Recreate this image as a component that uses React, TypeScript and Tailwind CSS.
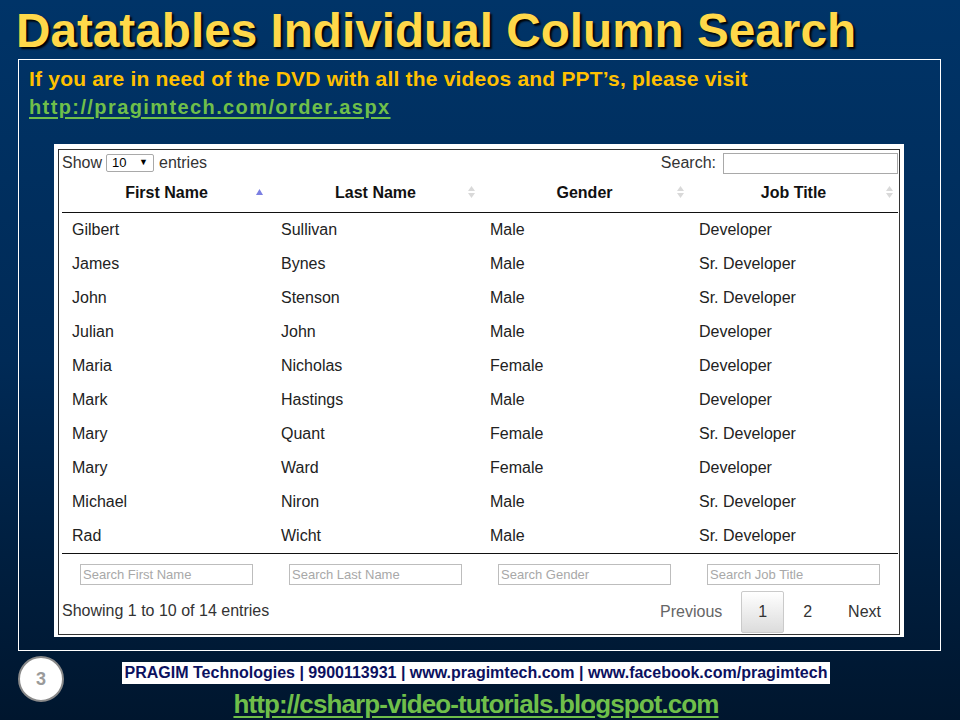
import React from 'react';

const rows = [
  ['Gilbert', 'Sullivan', 'Male', 'Developer'],
  ['James', 'Bynes', 'Male', 'Sr. Developer'],
  ['John', 'Stenson', 'Male', 'Sr. Developer'],
  ['Julian', 'John', 'Male', 'Developer'],
  ['Maria', 'Nicholas', 'Female', 'Developer'],
  ['Mark', 'Hastings', 'Male', 'Developer'],
  ['Mary', 'Quant', 'Female', 'Sr. Developer'],
  ['Mary', 'Ward', 'Female', 'Developer'],
  ['Michael', 'Niron', 'Male', 'Sr. Developer'],
  ['Rad', 'Wicht', 'Male', 'Sr. Developer'],
];

const columns = ['First Name', 'Last Name', 'Gender', 'Job Title'];

const SortAsc = () => (
  <svg width="7" height="6" viewBox="0 0 7 6" className="absolute right-[8px] top-[13px]">
    <polygon points="3.5,0 7,6 0,6" fill="#7b7fe2" />
  </svg>
);

const SortBoth = () => (
  <svg width="7" height="12" viewBox="0 0 7 12" className="absolute right-[5px] top-[10px]">
    <polygon points="3.5,0 7,5 0,5" fill="#d9d9d9" />
    <polygon points="0,7 7,7 3.5,12" fill="#d9d9d9" />
  </svg>
);

const App = () => {
  return (
    <div className="w-[960px] h-[720px] overflow-hidden bg-gradient-to-b from-[#003468] via-[#002a56] to-[#00162e] font-['Liberation_Sans',Arial,sans-serif]">
      {/* title */}
      <h1 className="pl-[16px] pt-[7px] text-[47.7px] leading-[48px] font-bold text-[#ffd84a] [text-shadow:2px_2px_2px_#000]">
        Datatables Individual Column Search
      </h1>

      <div className="ml-[18px] mt-[4px] w-[923px] h-[592px] border border-white">
        <div className="pl-[10px] pt-[5px]">
          <p className="text-[21px] leading-[28px] font-bold tracking-[0.2px] text-[#ffc000]">
            If you are in need of the DVD with all the videos and PPT’s, please visit
          </p>
          <p className="text-[20px] leading-[28px] font-bold tracking-[1.4px] text-[#6fbf4a] underline underline-offset-[3px]">
            http://pragimtech.com/order.aspx
          </p>
        </div>

        {/* datatable panel */}
        <div className="ml-[35px] mt-[23px] w-[850px] h-[493px] bg-white px-[4px] pt-[5px] pb-[2px]">
          <div className="h-full border border-[#333] pl-[3px] pr-[1px] text-[16px] text-[#222]">
            <div className="h-[26px] flex items-center justify-between text-[#333]">
              <div className="flex items-center">
                <span>Show</span>
                <span className="ml-[4px] mr-[5px] w-[48px] h-[18px] border border-[#a9a9a9] rounded-[2px] flex items-center justify-between px-[5px] text-[13px] text-black">
                  <span>10</span>
                  <span className="text-[9px]">▼</span>
                </span>
                <span>entries</span>
              </div>
              <div className="flex items-center">
                <span>Search:</span>
                <span className="ml-[7px] w-[175px] h-[21px] border border-[#a9a9a9]" />
              </div>
            </div>

            <div className="grid grid-cols-4 h-[37px] border-b border-[#111] font-bold text-[#111]">
              {columns.map((c, i) => (
                <div key={c} className="relative flex items-center justify-center pb-[2px]">
                  {c}
                  {i === 0 ? <SortAsc /> : <SortBoth />}
                </div>
              ))}
            </div>

            {rows.map((r, i) => (
              <div key={i} className="grid grid-cols-4 h-[34px] items-center">
                {r.map((v, j) => (
                  <div key={j} className="pl-[10px]">
                    {v}
                  </div>
                ))}
              </div>
            ))}

            <div className="grid grid-cols-4 border-t border-[#111] pt-[10px] pb-[6px]">
              {columns.map((c) => (
                <div key={c} className="px-[18px]">
                  <div className="h-[21px] border border-[#bdbdbd] flex items-center pl-[2px] text-[13px] text-[#a8a8a8]">
                    Search {c}
                  </div>
                </div>
              ))}
            </div>

            <div className="flex items-center justify-between h-[40px] pt-[2px] text-[#333]">
              <span className="-mt-[2px]">Showing 1 to 10 of 14 entries</span>
              <div className="flex items-center">
                <span className="px-[16px] py-[8px] border border-transparent text-[#666]">Previous</span>
                <span className="ml-[2px] px-[16px] py-[8px] border border-[#cacaca] rounded-[2px] bg-gradient-to-b from-white to-[#dcdcdc]">1</span>
                <span className="ml-[2px] px-[16px] py-[8px] border border-transparent">2</span>
                <span className="ml-[2px] px-[16px] py-[8px] border border-transparent">Next</span>
              </div>
            </div>
          </div>
        </div>
      </div>

      {/* footer */}
      <div className="flex">
        <div className="w-[80px] pl-[18px] pt-[5px]">
          <div className="w-[46px] h-[46px] rounded-full bg-white border-[2px] border-[#8a8a8a] flex items-center justify-center text-[18px] font-bold text-[#9a9a9a]">
            3
          </div>
        </div>
        <div className="flex-1 flex flex-col items-center pt-[11px]">
          <div className="bg-white h-[22px] px-[3px] flex items-center text-[16px] font-bold text-[#0b1160]">
            PRAGIM Technologies | 9900113931 | www.pragimtech.com | www.facebook.com/pragimtech
          </div>
          <div className="mt-[5px] text-[26px] leading-[30px] font-bold tracking-[-0.9px] text-[#6fbf4a] underline underline-offset-[3px]">
            http://csharp-video-tutorials.blogspot.com
          </div>
        </div>
        <div className="w-[88px]" />
      </div>
    </div>
  );
};

export default App;
